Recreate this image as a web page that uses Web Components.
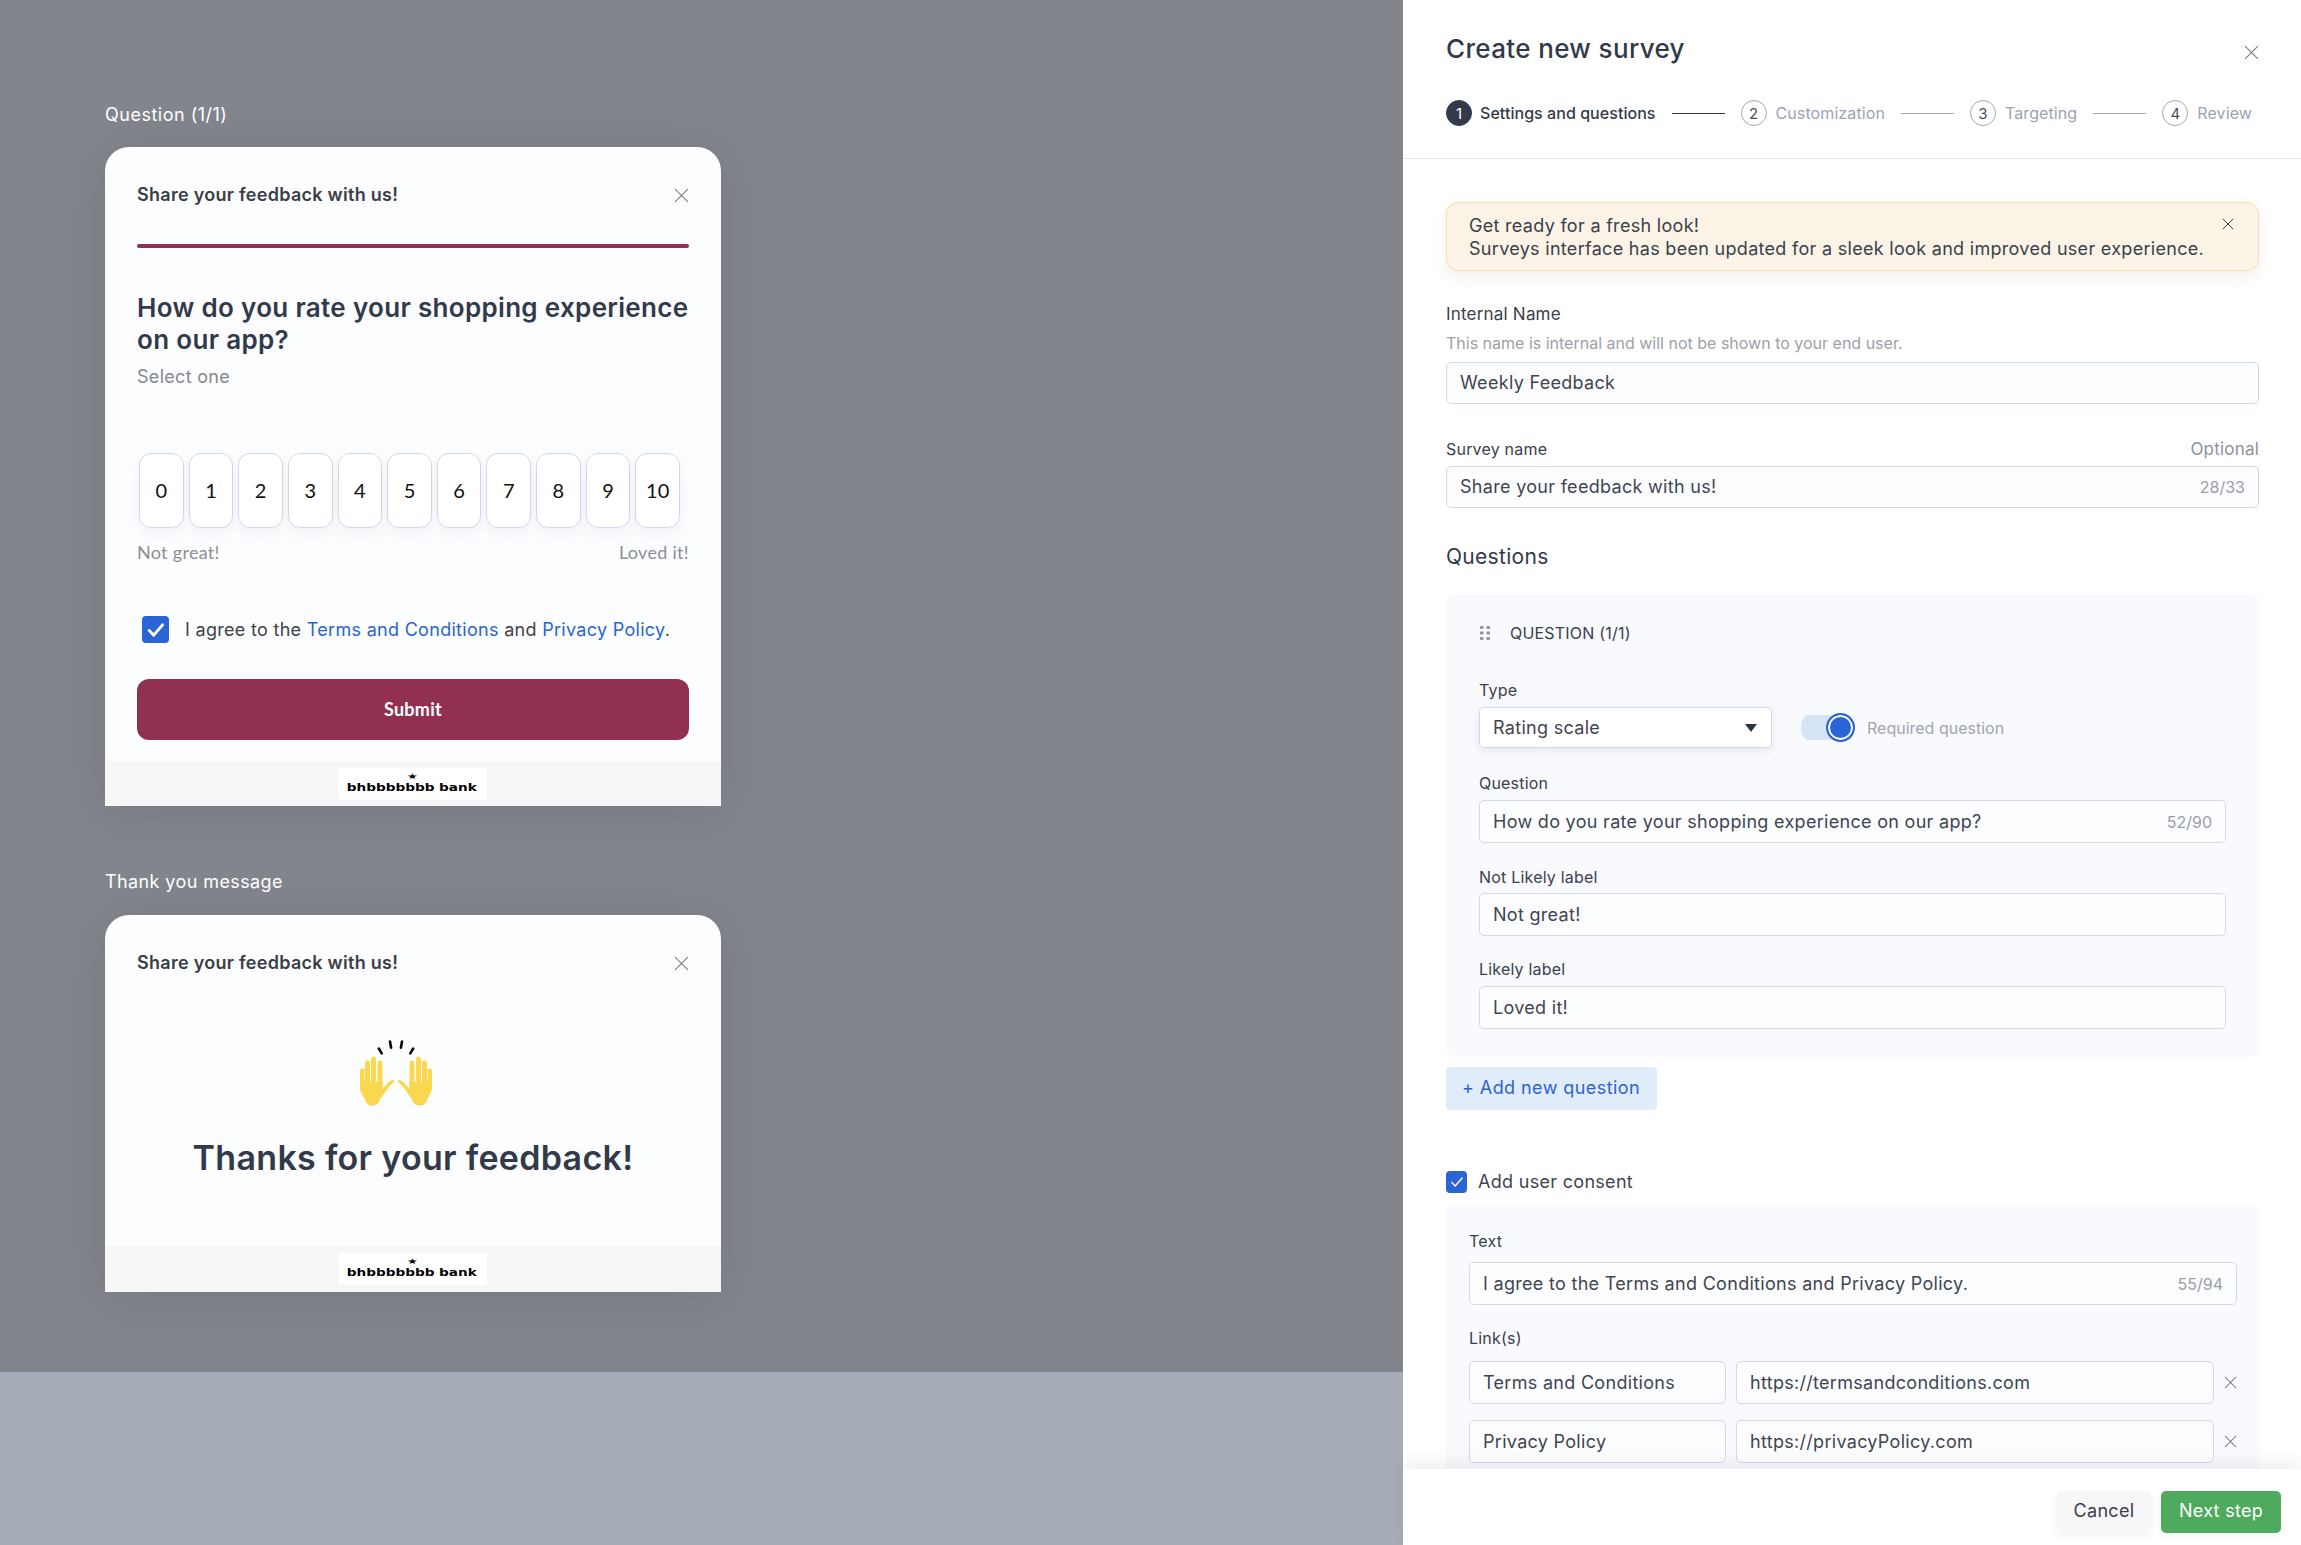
<!DOCTYPE html>
<html>
<head>
<meta charset="utf-8">
<title>Create new survey</title>
<style>
  html, body { margin: 0; padding: 0; height: 100%; overflow: hidden; }
  body { font-family: Inter, "Liberation Sans", sans-serif; color: #323a4a; letter-spacing: .3px; }
</style>
</head>
<body>
<survey-app></survey-app>
<script>
function render(el, html) {
  el.attachShadow({mode: 'open'}).innerHTML = html;
}

const CROSS = (size, color) => `<svg width="${size}" height="${size}" viewBox="0 0 14 14" fill="none" stroke="${color}" stroke-width="1.1" style="display:block"><path d="M1 1l12 12M13 1L1 13"/></svg>`;

class XIcon extends HTMLElement {
  connectedCallback() {
    const size = this.getAttribute('size') || 14;
    const color = this.getAttribute('color') || '#7b8088';
    render(this, `<style>:host{display:block;width:${size}px;height:${size}px;flex:none}</style>${CROSS(size, color)}`);
  }
}

class CheckBox extends HTMLElement {
  connectedCallback() {
    const w = this.getAttribute('w') || 27;
    const h = this.getAttribute('h') || 27;
    const sw = this.getAttribute('stroke') || 2.6;
    render(this, `<style>:host{display:flex;align-items:center;justify-content:center;flex:none;width:${w}px;height:${h}px;background:#2b64d6;border-radius:4px}</style>
      <svg width="${w * 0.66}" height="${w * 0.66}" viewBox="0 0 16 16" fill="none" stroke="#fff" stroke-width="${sw}" stroke-linecap="round" stroke-linejoin="round"><path d="M2 8.5l4 4.2L14 3.5"/></svg>`);
  }
}

class BrandStrip extends HTMLElement {
  constructor() {
    super();
    render(this, `<style>
      :host{display:block;height:45px;box-sizing:border-box;padding-top:7px;background:#f6f6f6;letter-spacing:0}
      .logo{width:149px;height:32px;margin-left:233px;background:#fff;display:flex;flex-direction:column;align-items:center;color:#000;overflow:hidden}
      .star{font:12px/10px "DejaVu Sans",sans-serif;margin-top:3px;transform:scaleY(.65)}
      .name{font:bold 10px/9px "DejaVu Sans",sans-serif;transform:translateX(-1px) scaleX(1.36);white-space:nowrap;margin-top:2px}
    </style><div class="logo"><span class="star">★</span><span class="name">bhbbbbbbb bank</span></div>`);
  }
}

class CardHead extends HTMLElement {
  constructor() {
    super();
    render(this, `<style>
      :host{display:flex;justify-content:space-between;align-items:center;padding-top:35px}
      span{font:600 18px/24px Inter,sans-serif;letter-spacing:.28px;color:#3a3f47;padding-top:1px;margin-bottom:-1px}
      x-icon{margin-top:2px}
    </style><span><slot></slot></span><x-icon size="15"></x-icon>`);
  }
}

class RatingScale extends HTMLElement {
  constructor() {
    super();
    let cells = '';
    for (let i = 0; i <= 10; i++) cells += `<div>${i}</div>`;
    render(this, `<style>
      :host{display:grid;grid-template-columns:repeat(11,1fr);gap:5px;width:541px;margin:64px 0 0 2px}
      div{box-sizing:border-box;height:75px;padding-bottom:2px;display:flex;align-items:center;justify-content:center;background:#fff;border:1px solid #d3d8e8;border-radius:12px;box-shadow:0 6px 12px rgba(60,70,100,.06);font:20px Lato,sans-serif;letter-spacing:0;color:#111}
    </style>${cells}`);
  }
}

class QuestionCard extends HTMLElement {
  constructor() {
    super();
    render(this, `<style>
      :host{display:block}
      .cap{font:18px/24px Inter,sans-serif;letter-spacing:.5px;color:#fff;padding-top:1px;margin-bottom:-1px}
      .card{margin-top:21px;width:616px;background:#fcfdff;border-radius:24px 24px 0 0;box-shadow:0 6px 50px rgba(0,0,0,.09);overflow:hidden}
      .in{padding:0 32px}
      .bar{height:4px;margin-top:38px;border-radius:2px;background:#92304f}
      h2{margin:44px 0 0;font:600 26px/32px Inter,sans-serif;letter-spacing:.32px;color:#323a4a}
      .sub{margin-top:9px;font:18px/24px Inter,sans-serif;color:#85888e}
      .ends{display:flex;justify-content:space-between;margin-top:12px;font:18px/24px Lato,sans-serif;color:#8c8f94}
      .agree{display:flex;align-items:center;gap:16px;margin:52px 0 0 5px;font:18px/27px Inter,sans-serif;color:#3f4247}
      a{color:#2b64d0;text-decoration:none}
      .submit{box-sizing:border-box;height:61px;padding-bottom:2px;margin-top:36px;border-radius:12px;background:#92304f;color:#fff;display:flex;align-items:center;justify-content:center;font:700 18px Lato,sans-serif}
      brand-strip{margin-top:21px}
    </style>
    <div class="cap">Question (1/1)</div>
    <div class="card">
      <div class="in">
        <card-head>Share your feedback with us!</card-head>
        <div class="bar"></div>
        <h2>How do you rate your shopping experience on our app?</h2>
        <div class="sub">Select one</div>
        <rating-scale></rating-scale>
        <div class="ends"><span>Not great!</span><span>Loved it!</span></div>
        <div class="agree"><check-box></check-box><span>I agree to the <a>Terms and Conditions</a> and <a>Privacy Policy</a>.</span></div>
        <div class="submit">Submit</div>
      </div>
      <brand-strip></brand-strip>
    </div>`);
  }
}

class ThankCard extends HTMLElement {
  constructor() {
    super();
    render(this, `<style>
      :host{display:block;margin-top:64px}
      .cap{font:18px/24px Inter,sans-serif;letter-spacing:.4px;color:#fff}
      .card{margin-top:21px;width:616px;background:#fcfdff;border-radius:24px 24px 0 0;box-shadow:0 6px 50px rgba(0,0,0,.09);overflow:hidden}
      card-head{padding-left:32px;padding-right:32px}
      svg{display:block;margin:66px auto 0;position:relative;left:-17px}
      h2{margin:30px 0 0;text-align:center;font:600 34px/44px Inter,sans-serif;letter-spacing:.3px;color:#323a4a}
      brand-strip{margin-top:66px;height:46px}
    </style>
    <div class="cap">Thank you message</div>
    <div class="card">
      <card-head>Share your feedback with us!</card-head>
      <svg width="74" height="66" viewBox="19 10.5 74 66">
        <defs><g id="hand" fill="#f9d84f">
          <rect x="20" y="39" width="4.4" height="22" rx="2.2"/>
          <rect x="25" y="31" width="5" height="28" rx="2.5"/>
          <rect x="31" y="27" width="5" height="32" rx="2.5"/>
          <rect x="37.5" y="31" width="5" height="28" rx="2.5"/>
          <path d="M20 52h22.5v7l5-5.5c1.5-1.6 3-2.6 5-3 2-.3 2.4 1.4 1 2.4-2 1.6-3.5 3-5 5.200l-9 12.400c-.4 3.400-3 5.500-7 5.500s-7-2-7.500-5.500C23.500 67 20 63 20 58z"/>
        </g></defs>
        <use href="#hand"/>
        <use href="#hand" transform="translate(112) scale(-1,1)"/>
        <g stroke="#0b0b0b" stroke-width="2.600" stroke-linecap="round" fill="none">
          <path d="M38.800 19l2.900 4.800M50 12l1.100 6.200M62 12l-1.100 6.200M73.200 19l-2.900 4.800"/>
        </g>
      </svg>
      <h2>Thanks for your feedback!</h2>
      <brand-strip></brand-strip>
    </div>`);
  }
}

class PreviewPane extends HTMLElement {
  constructor() {
    super();
    render(this, `<style>
      :host{display:flex;flex-direction:column;width:1403px;height:1545px;background:#a5acb8;flex:none}
      .dim{height:1372px;box-sizing:border-box;padding:102px 0 0 105px;background:#82858c;overflow:hidden}
    </style><div class="dim"><question-card></question-card><thank-card></thank-card></div>`);
  }
}

class StepItem extends HTMLElement {
  connectedCallback() {
    const on = this.hasAttribute('active');
    render(this, `<style>
      :host{display:flex;align-items:center;gap:${on ? 8 : 9}px;flex:none;letter-spacing:${on ? '.05px' : '.1px'}}
      i{box-sizing:border-box;width:26px;height:26px;border-radius:50%;display:flex;align-items:center;justify-content:center;font:15px Inter,sans-serif;
        border:1px solid ${on ? '#323a4a' : '#a4a8b0'};background:${on ? '#323a4a' : '#fff'};color:${on ? '#fff' : '#4a4f58'}}
      span{font:${on ? 500 : 400} 16px/20px Inter,sans-serif;color:${on ? '#323a4a' : '#9ca3af'};padding-bottom:1px}
    </style><i>${this.getAttribute('n')}</i><span><slot></slot></span>`);
  }
}

class StepLine extends HTMLElement {
  connectedCallback() {
    const c = this.hasAttribute('active') ? '#323a4a' : '#a4a8b0';
    render(this, `<style>:host{display:block;width:53px;height:1px;margin:1px 16px 0;background:${c};flex:none}</style>`);
  }
}

class FieldLabel extends HTMLElement {
  connectedCallback() {
    const size = this.getAttribute('size') || 16;
    render(this, `<style>
      :host{display:flex;justify-content:space-between;font:400 ${size}px/20px Inter,sans-serif;letter-spacing:.2px;color:#3a404c}
      ::slotted([slot=side]){font-size:17px;color:#8d9199}
    </style><span><slot></slot></span><slot name="side"></slot>`);
  }
}

class TextBox extends HTMLElement {
  connectedCallback() {
    const count = this.getAttribute('count');
    const h = this.getAttribute('h') || 43;
    render(this, `<style>
      :host{display:flex;align-items:center;justify-content:space-between;box-sizing:border-box;height:${h}px;padding:0 13px;background:#fcfdff;border:1px solid #d3d8e8;border-radius:5px;font:18px Inter,sans-serif;color:#3f4550}
      span{padding-bottom:1px}
      b{font:400 16px Inter,sans-serif;letter-spacing:0;color:#9a9ea6}
    </style><span><slot></slot></span>${count ? `<b>${count}</b>` : ''}`);
  }
}

class SelectBox extends HTMLElement {
  constructor() {
    super();
    render(this, `<style>
      :host{display:flex;align-items:center;justify-content:space-between;box-sizing:border-box;width:293px;height:41px;padding:0 14px 0 13px;background:#fff;border:1px solid #d3d8e8;border-radius:5px;box-shadow:0 3px 8px rgba(60,70,100,.1);font:18px Inter,sans-serif;color:#3f4550}
      svg{display:block}
    </style><span><slot></slot></span><svg width="12" height="8" viewBox="0 0 12 8"><path d="M0 0h12L6 8z" fill="#2f3540"/></svg>`);
  }
}

class ToggleSwitch extends HTMLElement {
  constructor() {
    super();
    render(this, `<style>
      :host{display:flex;align-items:center;gap:12px;font:16px Inter,sans-serif;letter-spacing:0;color:#a1a5ad}
      .track{width:54px;height:29px;display:flex;align-items:center;justify-content:flex-end;background:linear-gradient(#d6e4f8,#d6e4f8) left center/50px 25px no-repeat;border-radius:13px;flex:none}
      .track i{box-sizing:border-box;width:29px;height:29px;border-radius:50%;background:#2b64d6;border:2px solid #2b64d6;box-shadow:inset 0 0 0 2px #fff}
    </style><div class="track"><i></i></div><span><slot></slot></span>`);
  }
}

class GripIcon extends HTMLElement {
  constructor() {
    super();
    render(this, `<style>:host{display:block;width:12px;height:14px;flex:none}svg{display:block}</style>
      <svg width="12" height="14" viewBox="0 0 12 14" fill="#8e929a"><rect x="1" y="0" width="3.500" height="3" rx="1"/><rect x="7.500" y="0" width="3.500" height="3" rx="1"/><rect x="1" y="5.500" width="3.500" height="3" rx="1"/><rect x="7.500" y="5.500" width="3.500" height="3" rx="1"/><rect x="1" y="11" width="3.500" height="3" rx="1"/><rect x="7.500" y="11" width="3.500" height="3" rx="1"/></svg>`);
  }
}

class EditorHeader extends HTMLElement {
  constructor() {
    super();
    render(this, `<style>
      :host{display:block;padding:32px 49px 32px 43px;border-bottom:1px solid #e5e7eb;flex:none}
      .top{display:flex;justify-content:space-between;align-items:flex-start}
      h1{margin:0;font:500 26px/34px Inter,sans-serif;letter-spacing:.35px;color:#323a4a}
      x-icon{margin:13px -7px 0 0}
      .steps{display:flex;align-items:center;margin-top:34px}
    </style>
    <div class="top"><h1>Create new survey</h1><x-icon size="15"></x-icon></div>
    <div class="steps">
      <step-item n="1" active>Settings and questions</step-item><step-line active></step-line>
      <step-item n="2">Customization</step-item><step-line></step-line>
      <step-item n="3">Targeting</step-item><step-line></step-line>
      <step-item n="4">Review</step-item>
    </div>`);
  }
}

class EditorBody extends HTMLElement {
  constructor() {
    super();
    render(this, `<style>
      :host{display:block;flex:1;min-height:0;overflow:hidden;padding:43px 42px 0 43px}
      .alert{position:relative;box-sizing:border-box;height:69px;padding:11px 22px;background:#fbf4e6;border:1px solid #f8dfb0;border-radius:12px;box-shadow:0 6px 14px rgba(120,100,60,.1);font:18px/23px Inter,sans-serif;color:#3a404c}
      .alert x-icon{position:absolute;right:24px;top:15px}
      .hint{margin-top:9px;font:16px/20px Inter,sans-serif;letter-spacing:0;color:#9ca1a9}
      h3{margin:35px 0 0;font:400 21px/28px Inter,sans-serif;letter-spacing:.3px;color:#323a4a}
      .panel{margin-top:23px;background:#f8fafe;border-radius:8px}
      .q{padding:29px 33px 28px}
      .qhead{display:flex;align-items:center;gap:19px;font:400 16px/20px Inter,sans-serif;letter-spacing:.2px;color:#3a404c}
      .type{display:flex;align-items:center;gap:29px;margin-top:7px}
      .add{display:inline-block;box-sizing:border-box;width:211px;height:43px;margin-top:10px;padding-left:16px;border-radius:4px;background:#e1ecfb;color:#2b64d0;font:400 18px/41px Inter,sans-serif;letter-spacing:.42px}
      .consent{display:flex;align-items:center;gap:11px;margin-top:61px;font:18px/22px Inter,sans-serif;color:#3f4550}
      .c{margin-top:12px;padding:26px 22px 60px 23px}
      .row{display:flex;align-items:center;gap:10px}
      .row text-box:first-child{width:257px;flex:none}
      .row text-box:nth-child(2){width:478px;flex:none}
    </style>
    <div class="alert">Get ready for a fresh look!<br>Surveys interface has been updated for a sleek look and improved user experience.<x-icon size="12" color="#2f3540"></x-icon></div>
    <field-label size="17" style="margin-top:33px">Internal Name</field-label>
    <div class="hint">This name is internal and will not be shown to your end user.</div>
    <text-box h="42" style="margin-top:9px">Weekly Feedback</text-box>
    <field-label style="margin-top:35px">Survey name<span slot="side">Optional</span></field-label>
    <text-box h="42" count="28/33" style="margin-top:7px">Share your feedback with us!</text-box>
    <h3>Questions</h3>
    <div class="panel q">
      <div class="qhead"><grip-icon></grip-icon><span>QUESTION (1/1)</span></div>
      <field-label style="margin-top:37px">Type</field-label>
      <div class="type"><select-box>Rating scale</select-box><toggle-switch>Required question</toggle-switch></div>
      <field-label style="margin-top:25px">Question</field-label>
      <text-box count="52/90" style="margin-top:7px">How do you rate your shopping experience on our app?</text-box>
      <field-label style="margin-top:24px">Not Likely label</field-label>
      <text-box style="margin-top:6px">Not great!</text-box>
      <field-label style="margin-top:23px">Likely label</field-label>
      <text-box style="margin-top:7px">Loved it!</text-box>
    </div>
    <div class="add">+ Add new question</div>
    <div class="consent"><check-box w="21" h="22" stroke="1.600"></check-box><span>Add user consent</span></div>
    <div class="panel c">
      <field-label>Text</field-label>
      <text-box count="55/94" style="margin-top:11px">I agree to the Terms and Conditions and Privacy Policy.</text-box>
      <field-label style="margin-top:23px">Link(s)</field-label>
      <div class="row" style="margin-top:13px"><text-box>Terms and Conditions</text-box><text-box>https://termsandconditions.com</text-box><x-icon size="13"></x-icon></div>
      <div class="row" style="margin-top:16px"><text-box>Privacy Policy</text-box><text-box>https://privacyPolicy.com</text-box><x-icon size="13"></x-icon></div>
    </div>`);
  }
}

class EditorFooter extends HTMLElement {
  constructor() {
    super();
    render(this, `<style>
      :host{display:flex;justify-content:flex-end;gap:10px;box-sizing:border-box;height:76px;padding:22px 20px 0 0;background:#fff;box-shadow:0 -8px 14px rgba(0,0,0,.06);position:relative;flex:none}
      div{box-sizing:border-box;height:42px;padding-bottom:4px;border-radius:5px;display:flex;align-items:center;justify-content:center;font:18px Inter,sans-serif}
      .cancel{width:94px;background:#f7f7f7;color:#3a404c;box-shadow:0 3px 8px rgba(0,0,0,.05)}
      .next{width:120px;background:#4faa5e;color:#fff;box-shadow:0 3px 8px rgba(0,0,0,.05)}
    </style><div class="cancel">Cancel</div><div class="next">Next step</div>`);
  }
}

class SurveyEditor extends HTMLElement {
  constructor() {
    super();
    render(this, `<style>:host{display:flex;flex-direction:column;flex:1;height:1545px;background:#fff;min-width:0}</style>
      <editor-header></editor-header><editor-body></editor-body><editor-footer></editor-footer>`);
  }
}

class SurveyApp extends HTMLElement {
  constructor() {
    super();
    render(this, `<style>:host{display:flex;width:2301px;height:1545px;overflow:hidden}</style>
      <preview-pane></preview-pane><survey-editor></survey-editor>`);
  }
}

const elements = {
  'x-icon': XIcon, 'check-box': CheckBox, 'brand-strip': BrandStrip, 'card-head': CardHead,
  'rating-scale': RatingScale, 'question-card': QuestionCard, 'thank-card': ThankCard, 'preview-pane': PreviewPane,
  'step-item': StepItem, 'step-line': StepLine, 'field-label': FieldLabel, 'text-box': TextBox,
  'select-box': SelectBox, 'toggle-switch': ToggleSwitch, 'grip-icon': GripIcon, 'editor-header': EditorHeader,
  'editor-body': EditorBody, 'editor-footer': EditorFooter, 'survey-editor': SurveyEditor, 'survey-app': SurveyApp
};
for (const name in elements) window.customElements.define(name, elements[name]);
</script>
</body>
</html>
